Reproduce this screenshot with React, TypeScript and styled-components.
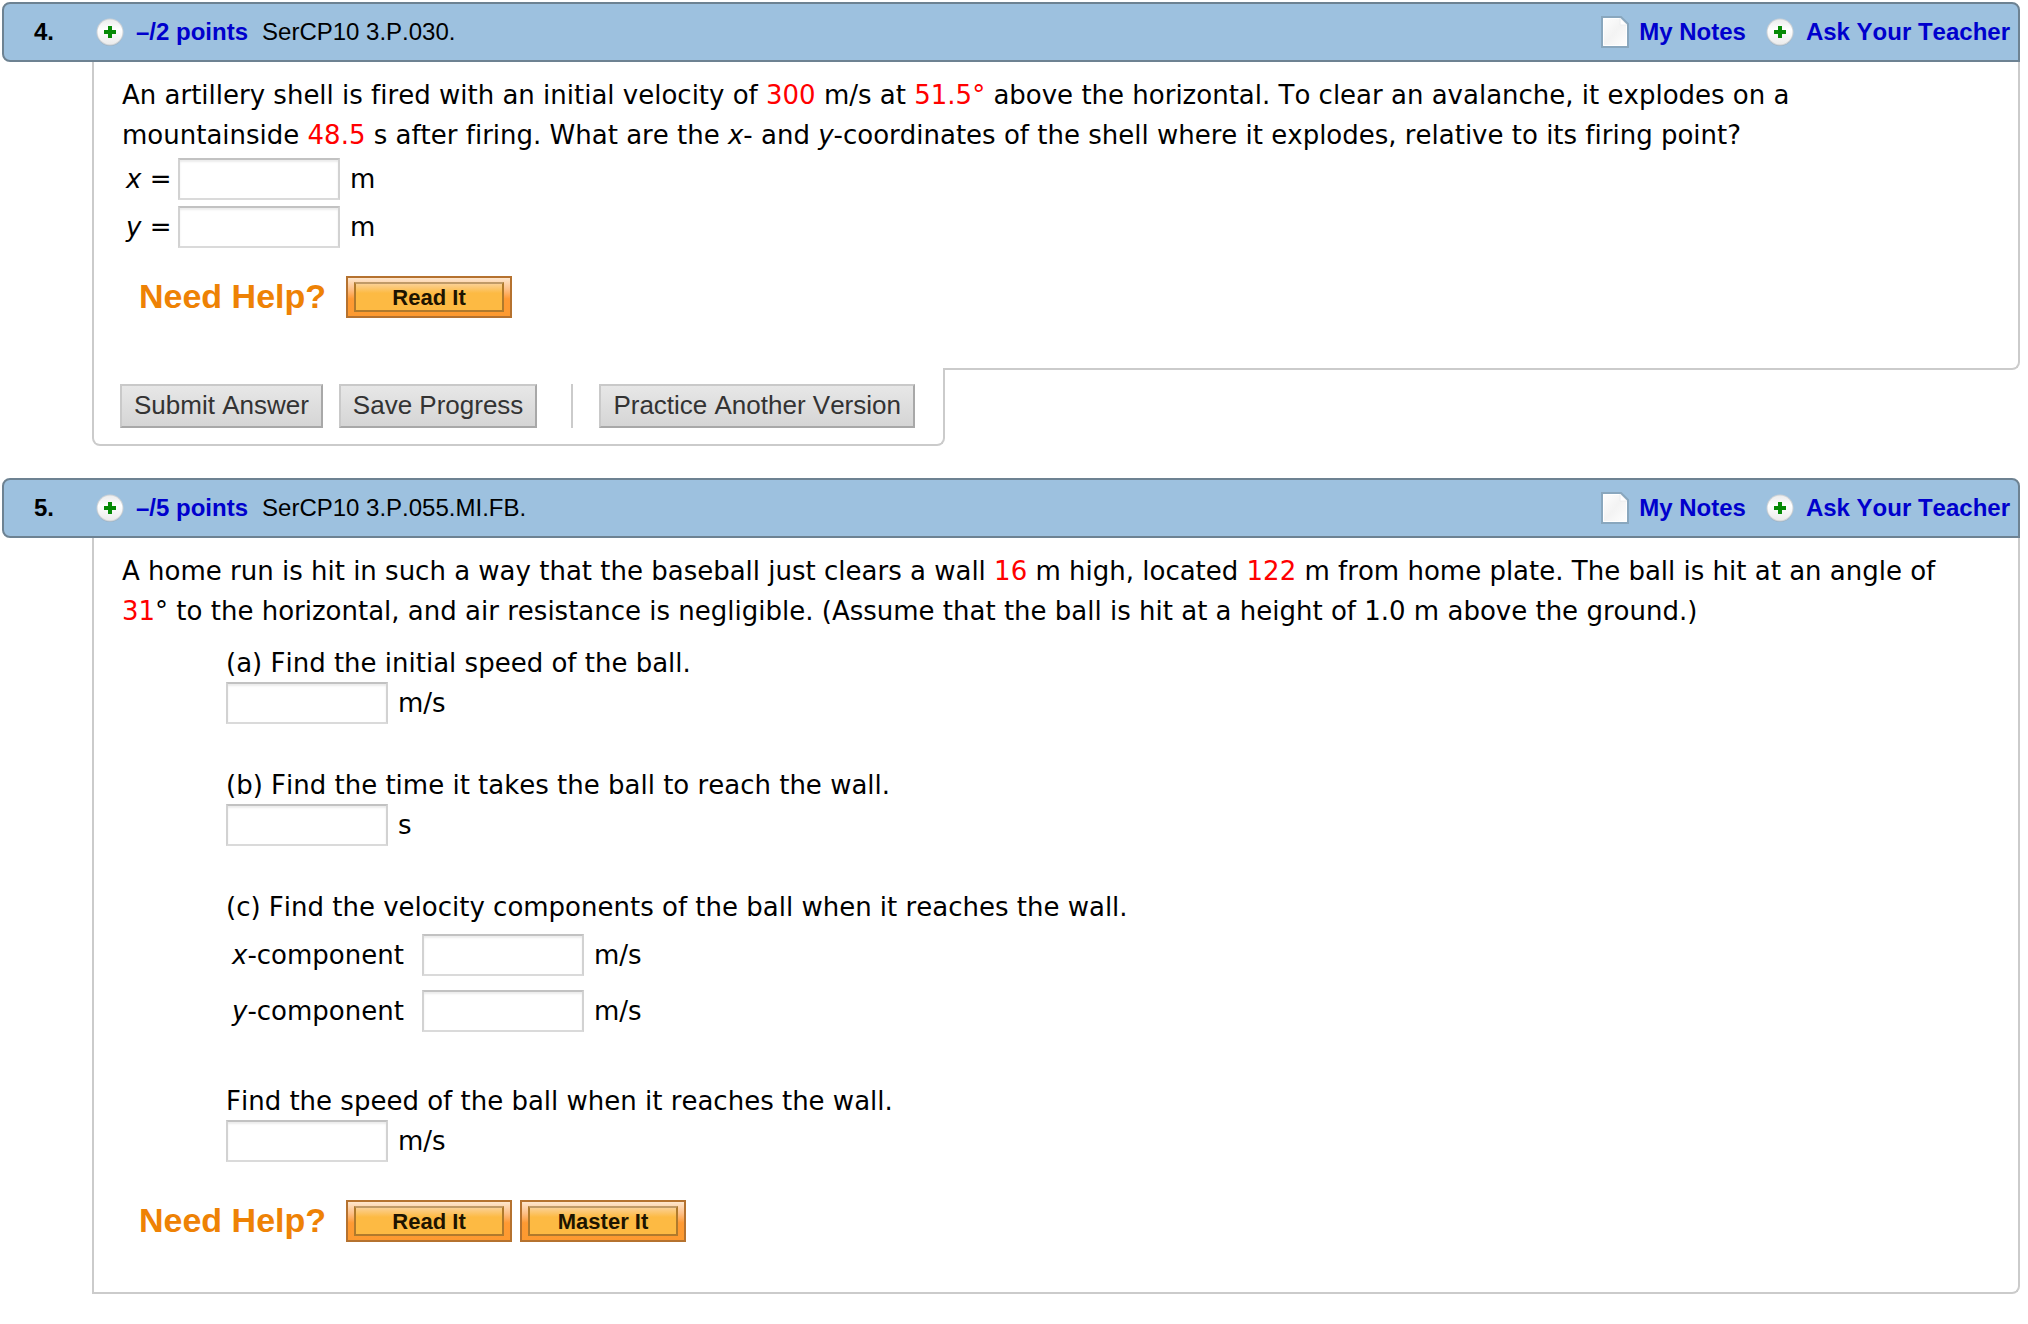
import React, { useId } from "react";
import styled, { createGlobalStyle } from "styled-components";

const sans = `"Liberation Sans", Arial, Helvetica, sans-serif`;
const reading = `Verdana, "DejaVu Sans", sans-serif`;
const line = "#cbcbcb";

const GlobalStyle = createGlobalStyle`
  *, *::before, *::after { box-sizing: border-box; }
  body {
    margin: 0;
    background: #fff;
    color: #000;
    font-kerning: none;
    font-variant-ligatures: none;
  }
  button, input { font-kerning: inherit; }
`;

const Page = styled.main`
  display: flex;
  flex-direction: column;
  gap: 32px;
  padding: 2px 8px 30px 2px;
  font-family: ${reading};
  font-size: 26px;
  line-height: 40px;
`;

const Header = styled.header`
  display: flex;
  align-items: center;
  justify-content: space-between;
  height: 60px;
  padding: 0 8px 0 30px;
  border: 2px solid #6d8292;
  border-radius: 8px 8px 0 8px;
  background: #9dc1df;
  font-family: ${sans};
  font-size: 24px;
  line-height: 28px;
`;

const HeaderGroup = styled.div<{ $gap: number }>`
  display: flex;
  align-items: center;
  gap: ${(p) => p.$gap}px;
`;

const Number = styled.h2`
  width: 48px;
  margin: 0;
  font-size: 24px;
  font-weight: bold;
`;

const HeaderLink = styled.a<{ $gap: number }>`
  display: flex;
  align-items: center;
  gap: ${(p) => p.$gap}px;
  color: #0000cd;
  font-weight: bold;
  text-decoration: none;
  white-space: nowrap;
`;

const Icon = styled.svg`
  flex: none;
  display: block;
`;

const Body = styled.div`
  margin-left: 90px;
  padding: 13px 28px 50px;
  border: solid ${line};
  border-width: 0 2px 2px;
  border-bottom-right-radius: 8px;
`;

const Statement = styled.p`
  margin: 0;
  padding-right: 20px;
`;

const Value = styled.span`
  color: #f00;
`;

const Answers = styled.div`
  display: flex;
  flex-direction: column;
  gap: 6px;
  padding: 3px 0 0 4px;
`;

const Components = styled(Answers)`
  gap: 14px;
  padding: 8px 0 8px 6px;
`;

const AnswerRow = styled.div`
  display: flex;
  align-items: center;
`;

const AnswerLabel = styled.label<{ $width: number }>`
  width: ${(p) => p.$width}px;
`;

const AnswerInput = styled.input`
  width: 162px;
  height: 42px;
  margin: 0 10px 0 0;
  padding: 0 6px;
  border: 2px solid;
  border-color: #c2c2c2 #d2d2d2 #dadada;
  border-radius: 0;
  background: #fff;
  box-shadow: inset 0 2px 2px rgba(0, 0, 0, 0.08);
  font-family: ${sans};
  font-size: 24px;
`;

const Parts = styled.div`
  display: flex;
  flex-direction: column;
  gap: 42px;
  padding: 13px 0 10px 104px;
`;

const Prompt = styled.label`
  display: block;
  line-height: 38px;
`;

const Help = styled.div`
  display: flex;
  align-items: center;
  gap: 8px;
  margin-top: 28px;
  padding-left: 17px;
`;

const HelpTitle = styled.h3`
  margin: 0 12px 0 0;
  padding-bottom: 2px;
  color: #ee8205;
  font-family: ${sans};
  font-size: 34px;
  line-height: 38px;
`;

const HelpButton = styled.button`
  width: 166px;
  height: 42px;
  padding: 4px 6px;
  border: 2px solid #b5722f;
  background: linear-gradient(#fee6cd, #fdbf86 30%, #ff9a33 55%, #fd9a30);
  color: #1d1400;
  font-family: ${sans};
  font-size: 22px;
  font-weight: bold;
  line-height: 28px;
  cursor: pointer;
`;

const HelpFace = styled.span`
  display: block;
  height: 30px;
  border: 2px solid #b07a2c;
  border-top-color: #c09a68;
  background: linear-gradient(#fbd093, #fdba43 35%);
`;

const Actions = styled.div`
  display: flex;
  width: fit-content;
  margin: -2px 0 0 90px;
  padding: 16px 28px 16px 26px;
  border: solid ${line};
  border-width: 0 2px 2px;
  border-radius: 0 0 8px 8px;
  background: #fff;
`;

const ActionGroup = styled.div`
  display: flex;
  gap: 16px;
  margin-right: 26px;
  padding-right: 34px;
  border-right: 2px solid ${line};
`;

const ActionButton = styled.button`
  height: 44px;
  padding: 0 12px 3px;
  border: 2px solid;
  border-color: #c9c9c9 #a8a8a8 #a8a8a8 #c9c9c9;
  background: linear-gradient(#e7e7e7, #d5d5d5);
  color: #333;
  font-family: ${sans};
  font-size: 26px;
  line-height: 30px;
  white-space: nowrap;
  cursor: pointer;
`;

function PlusIcon() {
  const id = useId();
  return (
    <Icon width="28" height="28" viewBox="0 0 28 28" aria-hidden="true">
      <defs>
        <linearGradient id={id} x1="0" y1="0" x2="0" y2="1">
          <stop offset="0" stopColor="#ececec" />
          <stop offset="0.4" stopColor="#fff" />
          <stop offset="1" stopColor="#ebebeb" />
        </linearGradient>
      </defs>
      <circle cx="14" cy="15" r="13" fill="#8a9aa8" opacity="0.55" />
      <circle cx="14" cy="14" r="13.5" fill="#cdd2d6" />
      <circle cx="14" cy="14" r="12.5" fill={`url(#${id})`} />
      <path d="M12 8h4v4h4v4h-4v4h-4v-4H8v-4h4z" fill="#068a06" />
    </Icon>
  );
}

function NoteIcon() {
  const id = useId();
  return (
    <Icon width="28" height="32" viewBox="0 0 28 32" aria-hidden="true">
      <defs>
        <linearGradient id={id} x1="0" y1="0" x2="1" y2="1">
          <stop offset="0" stopColor="#fff" />
          <stop offset="0.5" stopColor="#f3f3f3" />
          <stop offset="1" stopColor="#fff" />
        </linearGradient>
      </defs>
      <path d="M1 1h19l7 7v23H1z" fill={`url(#${id})`} stroke="#89a7be" strokeWidth="2" />
      <path d="M2.500 2.500h17l6 6v21h-23z" fill="none" stroke="#fff" strokeWidth="1" />
      <path d="M19 2v7h7z" fill="#fff" stroke="#eceef0" strokeWidth="1" />
    </Icon>
  );
}

function QuestionHeader(props: { number: string; points: string; source: string }) {
  return (
    <Header>
      <HeaderGroup $gap={14}>
        <HeaderGroup $gap={14}>
          <Number>{props.number}</Number>
          <HeaderLink href="#points" $gap={12}>
            <PlusIcon />
            {props.points}
          </HeaderLink>
        </HeaderGroup>
        <span>{props.source}</span>
      </HeaderGroup>
      <HeaderGroup $gap={20}>
        <HeaderLink href="#notes" $gap={10}>
          <NoteIcon />
          My Notes
        </HeaderLink>
        <HeaderLink href="#ask" $gap={12}>
          <PlusIcon />
          Ask Your Teacher
        </HeaderLink>
      </HeaderGroup>
    </Header>
  );
}

function LabelledAnswer(props: { axis: string; rest: string; unit: string; width: number }) {
  const id = useId();
  return (
    <AnswerRow>
      <AnswerLabel htmlFor={id} $width={props.width}>
        <i>{props.axis}</i>
        {props.rest}
      </AnswerLabel>
      <AnswerInput id={id} type="text" />
      <span>{props.unit}</span>
    </AnswerRow>
  );
}

function Part(props: { prompt: string; unit: string }) {
  const id = useId();
  return (
    <div>
      <Prompt htmlFor={id}>{props.prompt}</Prompt>
      <AnswerRow>
        <AnswerInput id={id} type="text" />
        <span>{props.unit}</span>
      </AnswerRow>
    </div>
  );
}

function NeedHelp({ options }: { options: string[] }) {
  return (
    <Help>
      <HelpTitle>Need Help?</HelpTitle>
      {options.map((option) => (
        <HelpButton key={option} type="button">
          <HelpFace>{option}</HelpFace>
        </HelpButton>
      ))}
    </Help>
  );
}

export default function App() {
  return (
    <>
      <GlobalStyle />
      <Page>
        <section>
          <QuestionHeader number="4." points="–/2 points" source="SerCP10 3.P.030." />
          <Body>
            <Statement>
              An artillery shell is fired with an initial velocity of <Value>300</Value> m/s at{" "}
              <Value>51.5°</Value> above the horizontal. To clear an avalanche, it explodes on a
              <br />
              mountainside <Value>48.5</Value> s after firing. What are the <i>x</i>- and{" "}
              <i>y</i>-coordinates of the shell where it explodes, relative to its firing point?
            </Statement>
            <Answers>
              <LabelledAnswer axis="x" rest=" =" unit="m" width={52} />
              <LabelledAnswer axis="y" rest=" =" unit="m" width={52} />
            </Answers>
            <NeedHelp options={["Read It"]} />
          </Body>
          <Actions>
            <ActionGroup>
              <ActionButton type="button">Submit Answer</ActionButton>
              <ActionButton type="button">Save Progress</ActionButton>
            </ActionGroup>
            <ActionButton type="button">Practice Another Version</ActionButton>
          </Actions>
        </section>

        <section>
          <QuestionHeader number="5." points="–/5 points" source="SerCP10 3.P.055.MI.FB." />
          <Body>
            <Statement>
              A home run is hit in such a way that the baseball just clears a wall{" "}
              <Value>16</Value> m high, located <Value>122</Value> m from home plate. The ball is
              hit at an angle of <Value>31</Value>° to the horizontal, and air resistance is
              negligible. (Assume that the ball is hit at a height of 1.0 m above the ground.)
            </Statement>
            <Parts>
              <Part prompt="(a) Find the initial speed of the ball." unit="m/s" />
              <Part prompt="(b) Find the time it takes the ball to reach the wall." unit="s" />
              <div>
                <Prompt as="div">
                  (c) Find the velocity components of the ball when it reaches the wall.
                </Prompt>
                <Components>
                  <LabelledAnswer axis="x" rest="-component" unit="m/s" width={190} />
                  <LabelledAnswer axis="y" rest="-component" unit="m/s" width={190} />
                </Components>
              </div>
              <Part prompt="Find the speed of the ball when it reaches the wall." unit="m/s" />
            </Parts>
            <NeedHelp options={["Read It", "Master It"]} />
          </Body>
        </section>
      </Page>
    </>
  );
}
